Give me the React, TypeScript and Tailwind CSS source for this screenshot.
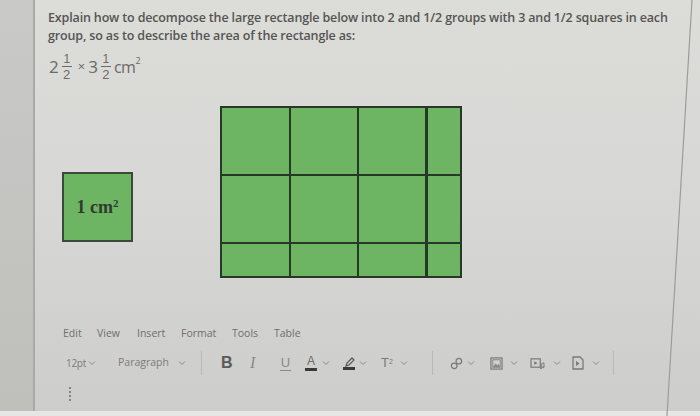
import React from "react";

const Chev = () => (
  <svg width="8" height="6" viewBox="0 0 8 6" className="inline-block">
    <path d="M1 1.5 L4 4.5 L7 1.5" fill="none" stroke="#8a8a88" strokeWidth="1" />
  </svg>
);

const Sep = () => <span className="block h-[24px] w-px bg-[#b9bab7]" />;

const LinkIcon = () => (
  <svg width="13" height="13" viewBox="0 0 14 14">
    <g fill="none" stroke="#7a7a78" strokeWidth="1.3">
      <circle cx="4.5" cy="9.5" r="3" />
      <circle cx="9.5" cy="4.5" r="3" />
    </g>
  </svg>
);

const ImgIcon = () => (
  <svg width="13" height="13" viewBox="0 0 14 14">
    <rect x="1" y="1" width="12" height="12" fill="none" stroke="#7a7a78" strokeWidth="1.3" />
    <rect x="3" y="3" width="8" height="8" fill="none" stroke="#7a7a78" strokeWidth="0.9" />
    <path d="M3 11 L6 7 L8 9 L9.5 7.5 L11 11 Z" fill="#8a8a88" />
  </svg>
);

const MediaIcon = () => (
  <svg width="15" height="13" viewBox="0 0 16 14">
    <rect x="1" y="2" width="10" height="9" fill="none" stroke="#7a7a78" strokeWidth="1.3" />
    <path d="M4.5 4.5 L8 6.5 L4.5 8.5 Z" fill="#7a7a78" />
    <path d="M12.5 7 V12 M12.5 7 L15 6.3 V11" fill="none" stroke="#7a7a78" strokeWidth="1" />
    <circle cx="11.8" cy="12" r="1" fill="#7a7a78" />
    <circle cx="14.3" cy="11" r="1" fill="#7a7a78" />
  </svg>
);

const DocIcon = () => (
  <svg width="12" height="14" viewBox="0 0 12 14">
    <path d="M1 1 H8 L11 4 V13 H1 Z" fill="none" stroke="#7a7a78" strokeWidth="1.3" />
    <path d="M4 5 L7.5 7.5 L4 10 Z" fill="#7a7a78" />
  </svg>
);

const items: { w: number; node: React.ReactNode }[] = [
  { w: 22, node: <span className="text-[10px] tracking-[-0.3px] text-[#7b7b79]">12pt</span> },
  { w: 30, node: <Chev /> },
  { w: 60, node: <span className="text-[10.5px] text-[#7b7b79]">Paragraph</span> },
  { w: 23, node: <Chev /> },
  { w: 20, node: <Sep /> },
  { w: 29, node: <span className="text-[16px] font-bold text-[#5a5a58]" style={{ fontFamily: "'Liberation Sans', sans-serif" }}>B</span> },
  { w: 30, node: <span className="text-[16px] italic text-[#8a8a88]" style={{ fontFamily: "'Liberation Serif', serif" }}>I</span> },
  {
    w: 25,
    node: (
      <span className="flex flex-col items-center">
        <span className="text-[13px] leading-[13px] text-[#8a8a88]" style={{ fontFamily: "'Liberation Sans', sans-serif" }}>U</span>
        <span className="mt-[1px] block h-px w-[11px] bg-[#8a8a88]" />
      </span>
    ),
  },
  {
    w: 17,
    node: (
      <span className="flex flex-col items-center">
        <span className="text-[12px] leading-[11px] text-[#6a6a68]" style={{ fontFamily: "'Liberation Sans', sans-serif" }}>A</span>
        <span className="mt-[1px] block h-[3px] w-[12px] bg-[#3a3a38]" />
      </span>
    ),
  },
  { w: 21, node: <Chev /> },
  {
    w: 16,
    node: (
      <span className="flex flex-col items-center">
        <svg width="11" height="10" viewBox="0 0 11 10">
          <path d="M2 9 L3 6 L8 1 L10 3 L5 8 Z" fill="none" stroke="#5a5a58" strokeWidth="1.3" />
        </svg>
        <span className="block h-[3px] w-[12px] bg-[#3a3a38]" />
      </span>
    ),
  },
  { w: 22, node: <Chev /> },
  {
    w: 19,
    node: (
      <span className="text-[13px] text-[#7a7a78]" style={{ fontFamily: "'Liberation Sans', sans-serif" }}>
        T<sup className="text-[7px]">2</sup>
      </span>
    ),
  },
  { w: 32, node: <Chev /> },
  { w: 18, node: <Sep /> },
  { w: 17, node: <LinkIcon /> },
  { w: 23, node: <Chev /> },
  { w: 20, node: <ImgIcon /> },
  { w: 20, node: <Chev /> },
  { w: 23, node: <MediaIcon /> },
  { w: 19, node: <Chev /> },
  { w: 20, node: <DocIcon /> },
  { w: 21, node: <Chev /> },
  { w: 10, node: <Sep /> },
];

const Frac = () => (
  <span
    className="mx-[3px] inline-flex flex-col items-center"
    style={{ fontFamily: "'Liberation Sans', sans-serif" }}
  >
    <span className="text-[12px] leading-[14px]">1</span>
    <span className="block h-px w-[10px] bg-[#6a6a68]" />
    <span className="text-[13px] leading-[15px]">2</span>
  </span>
);

const cols = [67, 66, 66, 33];
const rows = [66, 66, 32];

export default function App() {
  return (
    <div
      className="relative flex h-[416px] w-[700px] flex-col overflow-hidden bg-[#d6d7d4]"
      style={{ fontFamily: "'Open Sans', Lato, sans-serif" }}
    >
      <div className="flex flex-1">
        <div className="w-[35px] border-r-2 border-[#a9aaa7] bg-linear-to-b from-[#c9cac7] to-[#bfc0bc]" />
        <div className="flex flex-1 flex-col bg-linear-to-b from-[#dcdcd9] via-[#d7d8d5] to-[#cdcecb] pl-[13px] pt-[9px]">
          <p className="whitespace-nowrap text-[12.5px] font-semibold leading-[18px] tracking-[-0.15px] text-[#555553]">
            Explain how to decompose the large rectangle below into 2 and 1/2 groups with 3 and 1/2 squares in each
            <br />
            group, so as to describe the area of the rectangle as:
          </p>
          <div className="mt-[5px] flex h-[34px] items-center text-[17px] text-[#6a6a68]" style={{ fontFamily: "'Open Sans', sans-serif" }}>
            <span className="ml-[1px]">2</span>
            <Frac />
            <span className="mx-[3px] text-[13px]">×</span>
            <span>3</span>
            <Frac />
            <span className="text-[16px] tracking-[-0.5px]">cm</span>
            <span className="mb-[12px] text-[9px]">2</span>
          </div>
          <div className="mt-[22px] flex items-start">
            <div className="ml-[14px] mt-[66px] flex h-[70px] w-[71px] items-center justify-center border-2 border-[#3a4a3a] bg-[#6db463]">
              <span className="text-[18px] font-bold text-[#2f3b2f]" style={{ fontFamily: "'Liberation Serif', serif" }}>
                1 cm<sup className="text-[11px]">2</sup>
              </span>
            </div>
            <div
              className="ml-[87px] grid gap-[2px] border-2 border-[#263826] bg-[#263826]"
              style={{ gridTemplateColumns: cols.map((c) => c + "px").join(" "), gridTemplateRows: rows.map((r) => r + "px").join(" ") }}
            >
              {rows.map((_, ri) =>
                cols.map((_, ci) => (
                  <div key={ri + "-" + ci} className={ci === 3 ? "ml-[1px] bg-[#6db463]" : "bg-[#6db463]"} />
                ))
              )}
            </div>
          </div>
          <div className="mt-[48px] ml-[15px] flex text-[10.5px] leading-[14px] text-[#6f6f6d]">
            <span className="w-[34px]">Edit</span>
            <span className="w-[40px]">View</span>
            <span className="w-[44px]">Insert</span>
            <span className="w-[51px]">Format</span>
            <span className="w-[42px]">Tools</span>
            <span>Table</span>
          </div>
          <div className="mt-[8px] ml-[18px] flex h-[30px] items-center">
            {items.map((it, i) => (
              <span key={i} className="flex items-center" style={{ width: it.w }}>
                {it.node}
              </span>
            ))}
          </div>
          <div className="ml-[21px] mt-[9px] flex w-[3px] flex-col gap-[2px]">
            <span className="block h-[2px] w-[2px] rounded-full bg-[#6a6a68]" />
            <span className="block h-[2px] w-[2px] rounded-full bg-[#6a6a68]" />
            <span className="block h-[2px] w-[2px] rounded-full bg-[#6a6a68]" />
            <span className="block h-[2px] w-[2px] rounded-full bg-[#6a6a68]" />
          </div>
        </div>
      </div>
      <div className="h-[5px] bg-[#e6e6e4]" />
      <svg className="pointer-events-none absolute left-0 top-0" width="700" height="416">
        <line x1="692" y1="0" x2="667" y2="416" stroke="#9c9d9a" strokeWidth="1.2" />
      </svg>
    </div>
  );
}
